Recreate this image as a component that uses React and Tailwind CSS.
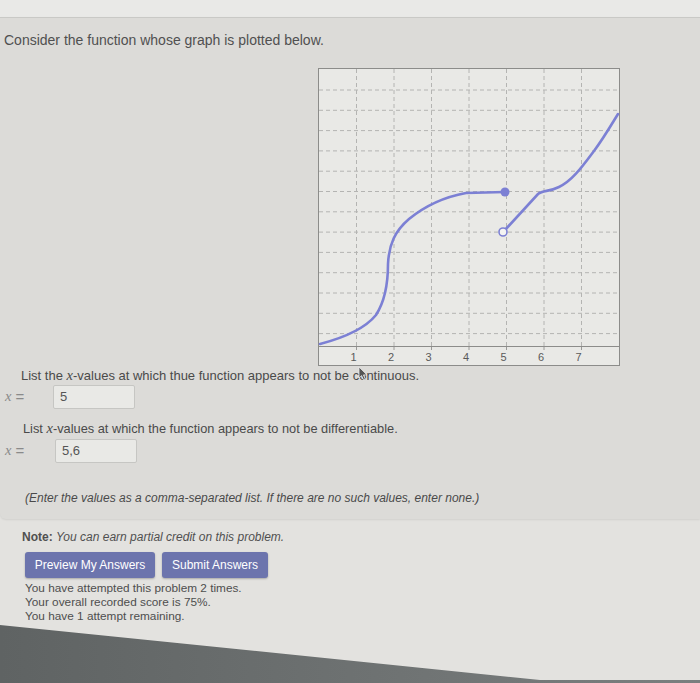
import React from 'react';

const cols = [1, 2, 3, 4, 5, 6, 7];
const rows = [0, 1, 2, 3, 4, 5, 6, 7, 8, 9, 10, 11, 12];

const MathX = () => (
  <span className="font-['Liberation_Serif',serif] italic text-[14.5px]">x</span>
);

const Graph = () => (
  <div className="relative ml-[318px] mt-[18px] w-[302px] h-[298px]">
    <svg width="302" height="298" viewBox="0 0 302 298">
      <rect x="0.5" y="0.5" width="301" height="297" fill="#e9e9e6" stroke="#8c8c8a" />
      <g transform="translate(1,1)">
        {cols.map((c) => (
          <line key={'v' + c} x1={c * 37.5} y1="0" x2={c * 37.5} y2="277" stroke="#b4b4b2" strokeDasharray="4 3" />
        ))}
        {rows.map((r) => (
          <line key={'h' + r} x1="0" y1={21 + r * 20.3} x2="300" y2={21 + r * 20.3} stroke="#b4b4b2" strokeDasharray="4 3" />
        ))}
        {cols.map((c) => (
          <line key={'t' + c} x1={c * 37.5} y1="277" x2={c * 37.5} y2="281" stroke="#9a9a98" />
        ))}
        <path
          d="M1,275 C20,270 44,262 57,246 C66,232 69,215 69,195 C70,175 76,162 90,150 C106,137 125,128 147,124 L186,123"
          fill="none"
          stroke="#7c80d4"
          strokeWidth="2.6"
          strokeLinecap="round"
        />
        <path
          d="M186,161 L219,125 C224,121 230,123 240,118 C253,112 263,98 275,82 C284,70 291,58 299,45"
          fill="none"
          stroke="#7c80d4"
          strokeWidth="2.6"
          strokeLinecap="round"
        />
        <circle cx="186" cy="123" r="4.5" fill="#7c80d4" />
        <circle cx="184" cy="163" r="4" fill="#f4f4f2" stroke="#7c80d4" strokeWidth="1.6" />
      </g>
      <line x1="0" y1="278.5" x2="302" y2="278.5" stroke="#8c8c8a" />
      {cols.map((c) => (
        <text
          key={'l' + c}
          x={c * 37.5 - 2}
          y="293"
          textAnchor="middle"
          fontSize="11"
          fill="#5a5a5a"
          fontFamily="Liberation Sans, Arial, sans-serif"
        >
          {c}
        </text>
      ))}
    </svg>
    {/* mouse pointer */}
    <svg className="absolute left-[40px] top-[298px]" width="10" height="15" viewBox="0 0 10 15">
      <path d="M1,1 L1,12 L3.6,9.6 L5.6,14 L7.4,13.2 L5.4,8.9 L9,8.9 Z" fill="#555" stroke="#e8e8e8" strokeWidth="0.8" />
    </svg>
  </div>
);

const AnswerBox = ({ value, ml }) => (
  <div className="flex items-center h-[24px]">
    <div className="w-[48px] pl-[5px] text-[#8a8a8a] flex items-center gap-[4px]">
      <MathX />
      <span className="text-[15px]">=</span>
    </div>
    <div className={`${ml} w-[82px] h-[24px] bg-[#e9e9e6] border border-[#c6c6c3] rounded-[2px] px-[6px] flex items-center text-[13px] text-[#555]`}>
      {value}
    </div>
  </div>
);

export default function App() {
  return (
    <div className="w-[700px] h-[683px] overflow-hidden bg-[#e3e2df] font-['Liberation_Sans',Arial,sans-serif] text-[#4a4a4a] flex flex-col">
      <div className="h-[17px] bg-[#e9e9e7] shrink-0" />
      <div className="border-t border-[#c9c9c6] bg-[#dcdbd8] rounded-bl-[6px] pb-[12px] shadow-[0_1px_2px_rgba(0,0,0,0.08)]">
        <p className="pt-[12px] pl-[4px] text-[14px] leading-[20px] text-[#505050]">
          Consider the function whose graph is plotted below.
        </p>
        <Graph />
        <p className="pl-[21px] text-[13px] leading-[18px]">
          List the <MathX />-values at which thue function appears to not be continuous.
        </p>
        <AnswerBox value="5" ml="ml-[5px]" />
        <p className="mt-[10px] pl-[23px] text-[12.8px] leading-[18px]">
          List <MathX />-values at which the function appears to not be differentiable.
        </p>
        <div className="mt-[1px]">
          <AnswerBox value="5,6" ml="ml-[7px]" />
        </div>
        <p className="mt-[26px] pl-[25px] text-[12px] leading-[18px] italic">
          (Enter the values as a comma-separated list. If there are no such values, enter none.)
        </p>
      </div>
      <p className="mt-[9px] pl-[22px] text-[12px] leading-[18px] text-[#505050]">
        <span className="font-bold">Note:</span> <span className="italic">You can earn partial credit on this problem.</span>
      </p>
      <div className="mt-[6px] pl-[25px] flex gap-[7px]">
        <button className="w-[130px] h-[26px] bg-[#6c74ad] rounded-[3px] text-white text-[12px] shadow-[0_1px_2px_rgba(0,0,0,0.25)]">
          Preview My Answers
        </button>
        <button className="w-[106px] h-[26px] bg-[#6c74ad] rounded-[3px] text-white text-[12px] shadow-[0_1px_2px_rgba(0,0,0,0.25)]">
          Submit Answers
        </button>
      </div>
      <div className="mt-[3px] pl-[25px] text-[11.8px] leading-[14px] text-[#4e4e4e]">
        <p>You have attempted this problem 2 times.</p>
        <p>Your overall recorded score is 75%.</p>
        <p>You have 1 attempt remaining.</p>
      </div>
      <div className="mt-auto h-[58px] bg-gradient-to-r from-[#5f6363] via-[#6d7171] to-[#7b7f7f] [clip-path:polygon(0_0,540px_55px,700px_55px,700px_58px,0_58px)]" />
    </div>
  );
}
